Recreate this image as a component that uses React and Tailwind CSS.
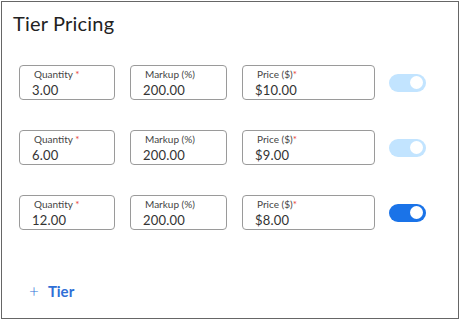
import React from "react";

function Field({ label, required, value, width }) {
  return (
    <div className={`${width} h-[35px] rounded-[4px] border border-[#9a9a9a] pl-[12px] pt-[2px] flex flex-col`}>
      <div className="text-[10px] leading-[13px] text-[#444] pl-[2px]">
        {label}
        {required && <span className="text-[#e8453c]">{label.startsWith("Price") ? "*" : " *"}</span>}
      </div>
      <div className="text-[13px] leading-[17px] text-[#333] mt-[1px] tracking-[0.2px]">{value}</div>
    </div>
  );
}

function Toggle({ on }) {
  return (
    <div className={`w-[37px] h-[18px] rounded-full flex items-center justify-end pr-[3px] ${on ? "bg-[#1a73e8]" : "bg-[#c2e4ff]"}`}>
      <div className="w-[13px] h-[13px] rounded-full bg-white" />
    </div>
  );
}

function Row({ q, m, p, on }) {
  return (
    <div className="flex items-center h-[35px]">
      <Field label="Quantity" required value={q} width="w-[96px]" />
      <div className="w-[15px]" />
      <Field label="Markup (%)" value={m} width="w-[97px]" />
      <div className="w-[15px]" />
      <Field label="Price ($)" required value={p} width="w-[133px]" />
      <div className="w-[14px]" />
      <Toggle on={on} />
    </div>
  );
}

export default function App() {
  return (
    <div className="w-[461px] h-[320px] bg-white p-px" style={{ fontFamily: "Lato, 'Noto Sans', sans-serif" }}>
      <div className="w-[458px] h-[318px] border-[1.5px] border-[#666] flex flex-col">
        <div className="pl-[11px] pt-[8px] text-[20px] leading-[26px] text-[#222] tracking-[0.2px]">Tier Pricing</div>
        <div className="pl-[17px] pt-[29px] flex flex-col gap-[30px]">
          <Row q="3.00" m="200.00" p="$10.00" on={false} />
          <Row q="6.00" m="200.00" p="$9.00" on={false} />
          <Row q="12.00" m="200.00" p="$8.00" on={true} />
        </div>
        <div className="pl-[27px] pt-[51px] flex items-center text-[#2f6fd6]">
          <span className="text-[17px] leading-[20px] font-light mr-[9px]">+</span>
          <span className="text-[15px] leading-[20px] font-bold">Tier</span>
        </div>
      </div>
    </div>
  );
}
